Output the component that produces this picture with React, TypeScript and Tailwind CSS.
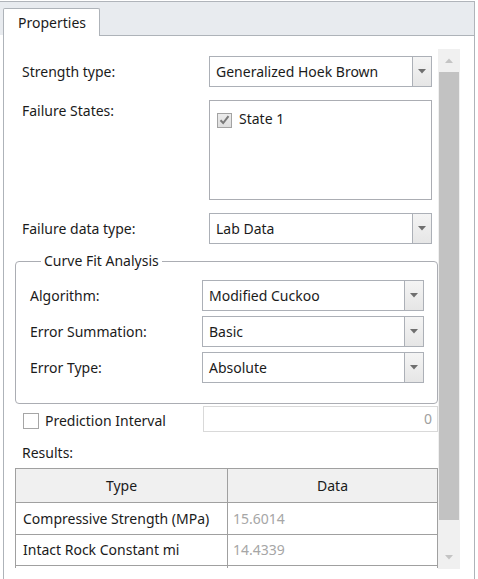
import type React from "react";

function Arrow({ up = false }: { up?: boolean }) {
  return (
    <svg width="8" height="5" viewBox="0 0 8 5" className={up ? "rotate-180" : ""}>
      <path d="M0 0H8L4 4.5Z" fill="currentColor" />
    </svg>
  );
}

function Combo({ value, className }: { value: string; className: string }) {
  return (
    <div className={`flex border border-[#acb0b7] bg-white ${className}`}>
      <span className="flex flex-1 items-center pl-[6px]">{value}</span>
      <span className="flex w-[19px] items-center justify-center border-l border-[#acb0b7] bg-[linear-gradient(#f4f4f4,#e6e6e6)] text-[#6f6f6f]">
        <Arrow />
      </span>
    </div>
  );
}

function Row({ label, labelWidth, children }: { label: string; labelWidth: string; children: React.ReactNode }) {
  return (
    <div className="flex items-center">
      <span className={`shrink-0 ${labelWidth}`}>{label}</span>
      {children}
    </div>
  );
}

export default function App() {
  return (
    <div className="h-[579px] w-[478px] overflow-hidden bg-white font-['Noto_Sans',sans-serif] text-[14px] leading-[20px] text-[#1b1b1b]">
      <div className="mt-px flex h-[34px] w-[475px] items-end border-t border-r border-[#b0b4ba] bg-[#e8ebef] pl-[3px]">
        <div className="relative top-px z-10 flex h-[28px] w-[97px] items-center rounded-t-[2px] border-x border-t border-[#aeb3b9] bg-white pl-[14px]">
          Properties
        </div>
      </div>

      <div className="ml-[3px] flex h-[545px] w-[472px] border-x border-t border-[#aeb3b9]">
        <div className="h-[532px] w-[434px] shrink-0 overflow-hidden pl-[18px]">
          <div className="mt-[20px]">
            <Row label="Strength type:" labelWidth="w-[187px]">
              <Combo value="Generalized Hoek Brown" className="h-[31px] w-[223px]" />
            </Row>
          </div>

          <div className="mt-[13px] flex">
            <span className="w-[187px] shrink-0 pt-px">Failure States:</span>
            <div className="h-[100px] w-[223px] border border-[#abadb3] bg-white pl-[7px] pt-[10px]">
              <label className="flex items-center gap-[7px]">
                <span className="flex h-[15px] w-[15px] items-center justify-center border border-[#a3a3a3] bg-[linear-gradient(#ececec,#dedede)] text-[#7a7a7a]">
                  <svg width="11" height="10" viewBox="0 0 11 10">
                    <path d="M1.5 5.2L4.2 8L9.5 1.2" fill="none" stroke="currentColor" strokeWidth="2" />
                  </svg>
                </span>
                <span className="-mt-[2px]">State 1</span>
              </label>
            </div>
          </div>

          <div className="mt-[13px]">
            <Row label="Failure data type:" labelWidth="w-[187px]">
              <Combo value="Lab Data" className="h-[31px] w-[223px]" />
            </Row>
          </div>

          <fieldset className="mt-[7px] ml-[-7px] w-[423px] rounded-[4px] border border-[#abadb3] pb-[20px] pl-[14px]">
            <legend className="ml-[11px] px-[3px]">Curve Fit Analysis</legend>
            <div className="mt-[9px] flex flex-col gap-[5px]">
              <Row label="Algorithm:" labelWidth="w-[172px]">
                <Combo value="Modified Cuckoo" className="h-[31px] w-[222px]" />
              </Row>
              <Row label="Error Summation:" labelWidth="w-[172px]">
                <Combo value="Basic" className="h-[31px] w-[222px]" />
              </Row>
              <Row label="Error Type:" labelWidth="w-[172px]">
                <Combo value="Absolute" className="h-[31px] w-[222px]" />
              </Row>
            </div>
          </fieldset>

          <div className="mt-[2px] flex h-[26px] items-center">
            <label className="flex w-[181px] shrink-0 items-center gap-[6px] pl-px pt-[3px]">
              <span className="h-[16px] w-[16px] border border-[#a6a6a6] bg-white" />
              <span>Prediction Interval</span>
            </label>
            <div className="flex h-[26px] w-[235px] items-center justify-end border border-[#d9d9d9] pr-[5px] text-[#a0a0a0]">0</div>
          </div>

          <div className="mt-[11px]">Results:</div>

          <table className="mt-[5px] ml-[-7px] w-[423px] border-collapse">
            <thead>
              <tr className="h-[34px] bg-[#f0f0f0]">
                <th className="w-[212px] border border-[#a0a0a0] font-normal">Type</th>
                <th className="border border-[#a0a0a0] font-normal">Data</th>
              </tr>
            </thead>
            <tbody>
              <tr className="h-[32px]">
                <td className="border border-[#a0a0a0] pl-[7px]">Compressive Strength (MPa)</td>
                <td className="border border-[#a0a0a0] pl-[5px] text-[#a6a6a6]">15.6014</td>
              </tr>
              <tr className="h-[31px]">
                <td className="border border-[#a0a0a0] pl-[7px]">Intact Rock Constant mi</td>
                <td className="border border-[#a0a0a0] pl-[5px] text-[#a6a6a6]">14.4339</td>
              </tr>
              <tr className="h-[31px]">
                <td className="border border-[#a0a0a0] pl-[7px]">&nbsp;</td>
                <td className="border border-[#a0a0a0] pl-[5px]">&nbsp;</td>
              </tr>
            </tbody>
          </table>
        </div>

        <div className="mt-[13px] flex h-[520px] w-[22px] shrink-0 flex-col bg-[#f0f0f0] px-px">
          <div className="flex h-[23px] items-center justify-center text-[#c4c4c4]">
            <Arrow up />
          </div>
          <div className="h-[448px] bg-[#c2c2c2]" />
          <div className="flex flex-1 items-end justify-center pb-[9px] text-[#c4c4c4]">
            <Arrow />
          </div>
        </div>
      </div>
    </div>
  );
}
